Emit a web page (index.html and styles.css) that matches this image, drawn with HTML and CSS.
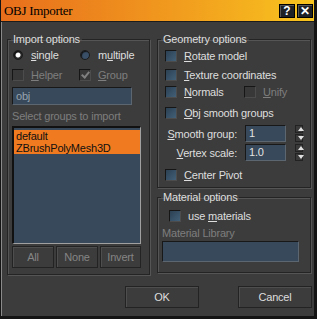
FILE: index.html
```html
<!DOCTYPE html>
<html lang="en">
<head>
    <meta charset="UTF-8">
    <title>OBJ Importer</title>
    <link rel="stylesheet" href="styles.css">
</head>
<body>
<div class="window">
    <div class="titlebar">
        <span class="title">OBJ Importer</span>
        <div class="title-btns">
            <span class="tbtn">?</span>
            <span class="tbtn">✕</span>
        </div>
    </div>

    <div class="content">
        <div class="columns">
            <!-- 左侧：导入选项 -->
            <fieldset class="group import">
                <legend>Import options</legend>
                <div class="pair radios">
                    <label class="opt"><span class="radio on"></span><span><u>s</u>ingle</span></label>
                    <label class="opt"><span class="radio"></span><span>m<u>u</u>ltiple</span></label>
                </div>
                <div class="pair checks">
                    <label class="opt off"><span class="check"></span><span><u>H</u>elper</span></label>
                    <label class="opt off"><span class="check ticked"></span><span><u>G</u>roup</span></label>
                </div>
                <div class="field name">obj</div>
                <div class="caption">Select groups to import</div>
                <ul class="list">
                    <li class="sel">default</li>
                    <li class="sel">ZBrushPolyMesh3D</li>
                </ul>
                <div class="list-btns">
                    <span class="btn off">All</span>
                    <span class="btn off">None</span>
                    <span class="btn off">Invert</span>
                </div>
            </fieldset>

            <div class="right">
                <!-- 几何选项 -->
                <fieldset class="group geometry">
                    <legend>Geometry options</legend>
                    <label class="opt row"><span class="check on"></span><span><u>R</u>otate model</span></label>
                    <label class="opt row"><span class="check on"></span><span><u>T</u>exture coordinates</span></label>
                    <div class="pair2 row">
                        <label class="opt"><span class="check on"></span><span><u>N</u>ormals</span></label>
                        <label class="opt off"><span class="check"></span><span><u>U</u>nify</span></label>
                    </div>
                    <label class="opt row"><span class="check on"></span><span><u>O</u>bj smooth groups</span></label>
                    <div class="spin-row first">
                        <span class="spin-label"><u>S</u>mooth group:</span>
                        <span class="field num">1</span>
                        <span class="spinner"><i class="up"></i><i class="down"></i></span>
                    </div>
                    <div class="spin-row">
                        <span class="spin-label"><u>V</u>ertex scale:</span>
                        <span class="field num">1.0</span>
                        <span class="spinner"><i class="up"></i><i class="down"></i></span>
                    </div>
                    <label class="opt row pivot"><span class="check on"></span><span><u>C</u>enter Pivot</span></label>
                </fieldset>

                <!-- 材质选项 -->
                <fieldset class="group material">
                    <legend>Material options</legend>
                    <label class="opt row mats"><span class="check on"></span><span>use <u>m</u>aterials</span></label>
                    <div class="caption lib">Material Library</div>
                    <div class="field libpath"></div>
                </fieldset>
            </div>
        </div>

        <div class="actions">
            <span class="btn big">OK</span>
            <span class="btn big">Cancel</span>
        </div>
    </div>
</div>
</body>
</html>
```

FILE: styles.css
```css
html, body {
    margin: 0;
    padding: 0;
    background: #3c3c3c;
}
.window {
    box-sizing: border-box;
    width: 317px;
    height: 319px;
    background: #3c3c3c;
    border: solid #141414;
    border-width: 0 3px 3px 1px;
    box-shadow: inset 1px 0 0 #8a8a8a;
    font-family: "Liberation Sans", Arial, sans-serif;
    font-size: 11px;
    letter-spacing: -0.2px;
    color: #dedede;
}

/* title bar */
.titlebar {
    height: 21px;
    border-bottom: 1px solid #1c1c1c;
    background: linear-gradient(to right, #e86e1c, #f0961e 50%, #f8c41e);
    display: flex;
    align-items: center;
    justify-content: space-between;
    padding: 0 1px 0 3px;
}
.title {
    font-family: "Liberation Serif", "Times New Roman", serif;
    font-size: 13px;
    letter-spacing: -0.3px;
    color: #000;
}
.title-btns {
    display: flex;
    gap: 2px;
}
.tbtn {
    width: 16px;
    height: 14px;
    box-sizing: border-box;
    background: #1e2126;
    border: 1px solid #000;
    box-shadow: inset 1px 1px 0 #555;
    color: #fff;
    font-weight: bold;
    font-size: 12px;
    line-height: 12px;
    text-align: center;
    letter-spacing: 0;
}

.content {
    padding: 11px 0 0 6px;
}
.columns {
    display: grid;
    grid-template-columns: 143px 154px;
    column-gap: 7px;
}

/* group boxes */
.group {
    margin: 0;
    min-width: 0;
    border: 1px solid #242424;
    box-shadow: inset 1px 1px 0 #555, 1px 1px 0 #555;
    padding: 0 4px;
}
.group legend {
    padding: 0 2px;
    margin-left: -1px;
    line-height: 13px;
    color: #dedede;
}
.import {
    height: 242px;
    box-sizing: border-box;
    padding-top: 1px;
}
.right {
    display: flex;
    flex-direction: column;
    gap: 3px;
}
.geometry, .material {
    padding-left: 7px;
}
.geometry legend, .material legend {
    margin-left: -4px;
}
.geometry {
    padding-bottom: 3px;
}
.material {
    height: 82px;
    box-sizing: border-box;
    padding-top: 2px;
}

/* options */
.opt {
    display: flex;
    align-items: center;
    gap: 7px;
    height: 16px;
    white-space: nowrap;
}
.opt.off {
    color: #7e7e7e;
}
.row {
    height: 19px;
}
.pair {
    display: grid;
    grid-template-columns: 67px auto;
}
.pair2 {
    display: grid;
    grid-template-columns: 79px auto;
}
.radios .opt {
    gap: 8px;
}
.radios .opt .radio {
    margin-left: 1px;
}
.checks {
    margin-top: 4px;
}
.radio {
    width: 10px;
    height: 10px;
    box-sizing: border-box;
    border-radius: 50%;
    border: 1px solid #1a1a1a;
    background: #3a5068;
    box-shadow: inset 1px 1px 1px #111;
}
.radio.on {
    background: radial-gradient(circle, #fff 0 2px, #2a2a2a 3px);
}
.check {
    width: 12px;
    height: 12px;
    box-sizing: border-box;
    border: 1px solid;
    border-color: #161616 #4c4c4c #4c4c4c #161616;
    background: #383838;
    position: relative;
}
.check.on {
    background: linear-gradient(135deg, #2c4052, #426078);
}
.check.ticked::after {
    content: "";
    position: absolute;
    left: 3px;
    top: 0;
    width: 3px;
    height: 6px;
    border: solid #808080;
    border-width: 0 2px 2px 0;
    transform: rotate(40deg);
}

/* text fields */
.field {
    box-sizing: border-box;
    background: #37495a;
    border: 1px solid;
    border-color: #181818 #5c6670 #5c6670 #181818;
    color: #e2e2e2;
    padding: 0 3px;
}
.name {
    width: 120px;
    height: 18px;
    line-height: 16px;
    margin-top: 4px;
    color: #97a3ae;
}
.caption {
    color: #7e7e7e;
    line-height: 13px;
}
.import .caption {
    margin-top: 5px;
}
.list {
    list-style: none;
    margin: 3px 0 0;
    padding: 2px 0 0;
    width: 129px;
    height: 118px;
    box-sizing: border-box;
    background: #37495a;
    border: solid;
    border-width: 2px 1px 1px 2px;
    border-color: #111 #a0a0a0 #a0a0a0 #111;
}
.list li {
    height: 12px;
    line-height: 12px;
    padding-left: 2px;
    color: #111;
}
.list li.sel {
    background: #f07a1f;
}
.list-btns {
    display: flex;
    gap: 2px;
    margin-top: 2px;
}

/* buttons */
.btn {
    box-sizing: border-box;
    height: 22px;
    width: 42px;
    line-height: 20px;
    text-align: center;
    background: #3c3c3c;
    border: 1px solid #232323;
    box-shadow: inset 1px 1px 0 #4e4e4e;
    color: #dedede;
}
.btn.off {
    color: #858585;
}
.list-btns .btn:last-child {
    width: 41px;
}

/* spinner rows */
.spin-row {
    display: grid;
    grid-template-columns: 72px 43px 11px;
    column-gap: 6px;
    align-items: center;
    height: 19px;
}
.spin-row.first {
    margin-top: 2px;
}
.spin-label {
    text-align: right;
    white-space: nowrap;
}
.num {
    height: 17px;
    line-height: 15px;
    margin-left: 2px;
}
.spinner {
    height: 17px;
    display: flex;
    flex-direction: column;
    gap: 1px;
    margin-left: 3px;
}
.spinner i {
    flex: 1;
    position: relative;
    background: #3a3a3a;
    border: 1px solid #222;
}
.spinner i::after {
    content: "";
    position: absolute;
    left: 2px;
    border-left: 3px solid transparent;
    border-right: 3px solid transparent;
}
.spinner .up::after {
    top: 1px;
    border-bottom: 4px solid #e0e0e0;
}
.spinner .down::after {
    top: 1px;
    border-top: 4px solid #e0e0e0;
}
.pivot {
    margin-top: 3px;
}

.mats {
    padding-left: 4px;
}
.lib {
    margin-top: 2px;
    margin-left: -3px;
}
.libpath {
    width: 137px;
    height: 21px;
    margin: 1px 0 0 -3px;
}

.actions {
    display: flex;
    justify-content: flex-end;
    gap: 39px;
    margin-top: 11px;
    width: 305px;
}
.btn.big {
    width: 74px;
}
```
